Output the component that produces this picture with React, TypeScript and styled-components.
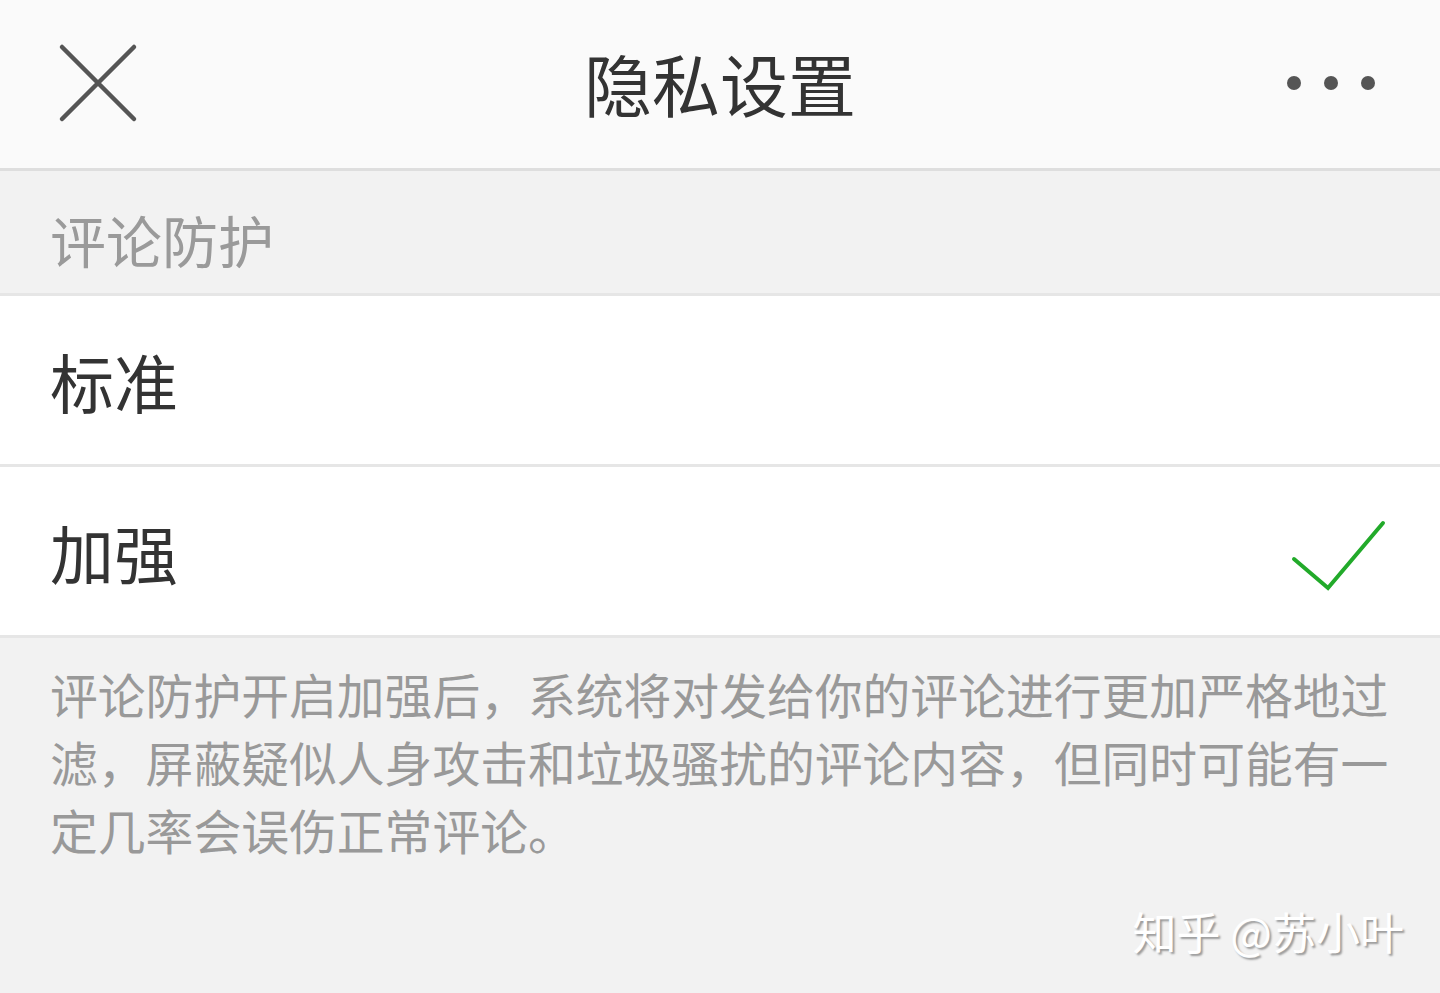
import React from "react";
import styled, { createGlobalStyle } from "styled-components";

const Global = createGlobalStyle`
  html, body { margin: 0; padding: 0; background: #f2f2f2; }
  body { font-family: "Noto Sans CJK SC", "Noto Sans", sans-serif; }
  * { box-sizing: border-box; }
`;

const Page = styled.div`
  width: 1440px;
  height: 993px;
  background: #f2f2f2;
  display: flex;
  flex-direction: column;
  position: relative;
  overflow: hidden;
`;

const Header = styled.header`
  height: 171px;
  background: #fafafa;
  border-bottom: 3px solid #dedede;
  display: grid;
  grid-template-columns: 200px 1fr 200px;
  align-items: center;
  padding-bottom: 2px;
`;

const IconBtn = styled.div<{ $align: "start" | "end" }>`
  display: flex;
  justify-content: ${(p) => (p.$align === "start" ? "flex-start" : "flex-end")};
  padding: ${(p) => (p.$align === "start" ? "0 0 0 58px" : "0 60px 0 0")};
  align-items: center;
`;

const Title = styled.h1`
  margin: 0;
  text-align: center;
  font-size: 68px;
  font-weight: 400;
  color: #333;
  line-height: 1;
`;

const SectionLabel = styled.div`
  height: 125px;
  display: flex;
  align-items: center;
  padding-left: 50px;
  padding-top: 12px;
  font-size: 56px;
  color: #9a9a9a;
  border-bottom: 3px solid #e6e6e6;
`;

const Row = styled.div`
  height: 171px;
  background: #fff;
  display: flex;
  align-items: center;
  justify-content: space-between;
  padding: 0 54px 0 50px;
  border-bottom: 3px solid #e6e6e6;
`;

const RowText = styled.span`
  font-size: 64px;
  color: #333;
  line-height: 1;
`;

const Desc = styled.p`
  margin: 0;
  padding: 22px 36px 0 50px;
  font-size: 47.8px;
  line-height: 68px;
  color: #999;
`;

const Watermark = styled.div`
  position: absolute;
  right: 36px;
  bottom: 40px;
  font-size: 44px;
  color: #fff;
  text-shadow: 2px 2px 2px #9a9a9a;
  line-height: 1;
`;

const CloseIcon = () => (
  <svg width="80" height="80" viewBox="0 0 80 80">
    <path d="M4 4 L76 76 M76 4 L4 76" stroke="#555" strokeWidth="4.5" strokeLinecap="round" fill="none" />
  </svg>
);

const MoreIcon = () => (
  <svg width="96" height="20" viewBox="0 0 96 20">
    <circle cx="10" cy="10" r="7" fill="#555" />
    <circle cx="47" cy="10" r="7" fill="#555" />
    <circle cx="84" cy="10" r="7" fill="#555" />
  </svg>
);

const Check = () => (
  <svg width="96" height="80" viewBox="0 0 96 80">
    <path d="M4 48 L38 77 L93 12" stroke="#22aa2a" strokeWidth="4" fill="none" strokeLinecap="round" strokeLinejoin="miter" />
  </svg>
);

export default function App() {
  return (
    <>
      <Global />
      <Page>
        <Header>
          <IconBtn $align="start">
            <CloseIcon />
          </IconBtn>
          <Title>隐私设置</Title>
          <IconBtn $align="end">
            <MoreIcon />
          </IconBtn>
        </Header>
        <SectionLabel>评论防护</SectionLabel>
        <Row>
          <RowText>标准</RowText>
        </Row>
        <Row>
          <RowText>加强</RowText>
          <Check />
        </Row>
        <Desc>
          评论防护开启加强后，系统将对发给你的评论进行更加严格地过滤，屏蔽疑似人身攻击和垃圾骚扰的评论内容，但同时可能有一定几率会误伤正常评论。
        </Desc>
        <Watermark>知乎 @苏小叶</Watermark>
      </Page>
    </>
  );
}
